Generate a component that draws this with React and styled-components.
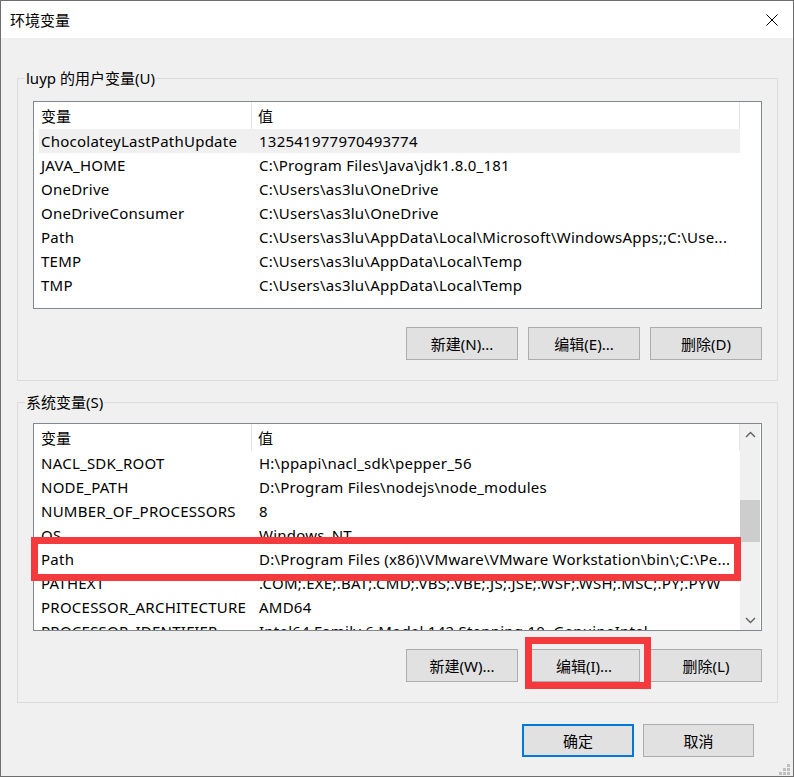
import React from 'react';
import styled, { createGlobalStyle } from 'styled-components';

const GlobalStyle = createGlobalStyle`
  html, body { margin: 0; padding: 0; background: #ffffff; }
  body {
    font-family: "Noto Sans", "Noto Sans CJK SC", sans-serif;
    font-size: 15px;
    color: #000000;
  }
  * { box-sizing: border-box; }
`;

const Window = styled.div`
  position: relative;
  width: 794px;
  height: 777px;
  border: 1px solid #6e6e6e;
  background: #f0f0f0;
  display: flex;
  flex-direction: column;
  overflow: hidden;
`;

const TitleBar = styled.div`
  height: 37px;
  flex: none;
  background: #ffffff;
  display: flex;
  align-items: center;
  justify-content: space-between;
  padding-left: 9px;
`;

const Title = styled.span`
  font-size: 15px;
  line-height: 20px;
`;

const CloseButton = styled.div`
  width: 42px;
  height: 37px;
  display: flex;
  align-items: center;
  justify-content: center;
`;

const Body = styled.div`
  flex: 1;
  display: flex;
  flex-direction: column;
  padding: 30px 15px 0 16px;
`;

const Group = styled.fieldset`
  margin: ${(p) => p.$top || 0}px 0 0 0;
  border: 1px solid #dcdcdc;
  padding: 0 15px 20px 15px;
  min-width: 0;
`;

const Legend = styled.legend`
  margin-left: -8px;
  padding: 0 1px;
  font-size: 15px;
  line-height: 20px;
`;

const ListBox = styled.div`
  margin-top: ${(p) => p.$top}px;
  height: 208px;
  border: 1px solid #828790;
  background: #ffffff;
  display: flex;
  padding-left: 5px;
  overflow: hidden;
`;

const ListBody = styled.div`
  width: 701px;
  flex: none;
  overflow: hidden;
`;

const columns = `213px 1fr`;

const HeaderRow = styled.div`
  display: grid;
  grid-template-columns: ${columns};
  height: 27px;
`;

const HeaderCell = styled.div`
  padding: 2px 0 0 ${(p) => (p.$first ? 2 : 6)}px;
  line-height: 24px;
  border-right: 1px solid #e5e5e5;
  white-space: nowrap;
  overflow: hidden;
`;

const Row = styled.div`
  display: grid;
  grid-template-columns: ${columns};
  height: 24px;
  line-height: 24px;
  letter-spacing: 0.24px;
  background: ${(p) => (p.$selected ? '#f0f0f0' : 'transparent')};
`;

const Cell = styled.div`
  padding-left: ${(p) => (p.$first ? 2 : 7)}px;
  white-space: nowrap;
  overflow: hidden;
`;

const Scrollbar = styled.div`
  width: 20px;
  flex: none;
  background: #f0f0f0;
  display: flex;
  flex-direction: column;
`;

const ArrowButton = styled.div`
  height: 20px;
  flex: none;
  display: flex;
  align-items: center;
  justify-content: center;
`;

const Track = styled.div`
  flex: 1;
  display: flex;
  flex-direction: column;
`;

const Thumb = styled.div`
  height: 42px;
  background: #cdcdcd;
`;

const ButtonRow = styled.div`
  margin-top: ${(p) => p.$top || 18}px;
  display: flex;
  justify-content: flex-end;
  gap: ${(p) => p.$gap || 10}px;
  padding-right: ${(p) => p.$right || 0}px;
`;

const Button = styled.div`
  width: ${(p) => p.$w || 112}px;
  height: 33px;
  display: flex;
  align-items: center;
  justify-content: center;
  background: #e1e1e1;
  border: ${(p) => (p.$default ? '2px solid #0078d7' : '1px solid #adadad')};
  font-size: 15px;
`;

const Highlight = styled.div`
  position: absolute;
  border: 7px solid #f43a3c;
  pointer-events: none;
`;

const Grip = styled.div`
  position: absolute;
  right: 1px;
  bottom: 1px;
  width: 14px;
  height: 14px;
`;

const userVars = [
  ['ChocolateyLastPathUpdate', '132541977970493774'],
  ['JAVA_HOME', String.raw`C:\Program Files\Java\jdk1.8.0_181`],
  ['OneDrive', String.raw`C:\Users\as3lu\OneDrive`],
  ['OneDriveConsumer', String.raw`C:\Users\as3lu\OneDrive`],
  ['Path', String.raw`C:\Users\as3lu\AppData\Local\Microsoft\WindowsApps;;C:\Use...`],
  ['TEMP', String.raw`C:\Users\as3lu\AppData\Local\Temp`],
  ['TMP', String.raw`C:\Users\as3lu\AppData\Local\Temp`],
];

const sysVars = [
  ['NACL_SDK_ROOT', String.raw`H:\ppapi\nacl_sdk\pepper_56`],
  ['NODE_PATH', String.raw`D:\Program Files\nodejs\node_modules`],
  ['NUMBER_OF_PROCESSORS', '8'],
  ['OS', 'Windows_NT'],
  ['Path', String.raw`D:\Program Files (x86)\VMware\VMware Workstation\bin\;C:\Pe...`],
  ['PATHEXT', '.COM;.EXE;.BAT;.CMD;.VBS;.VBE;.JS;.JSE;.WSF;.WSH;.MSC;.PY;.PYW'],
  ['PROCESSOR_ARCHITECTURE', 'AMD64'],
  ['PROCESSOR_IDENTIFIER', 'Intel64 Family 6 Model 142 Stepping 10, GenuineIntel'],
];

const Chevron = ({ up }) => (
  <svg width="11" height="7" viewBox="0 0 11 7">
    <path
      d={up ? 'M1 6 L5.5 1.5 L10 6' : 'M1 1 L5.5 5.5 L10 1'}
      fill="none"
      stroke="#606060"
      strokeWidth="1.4"
    />
  </svg>
);

function VarList({ rows, top, selected, scroll }) {
  return (
    <ListBox $top={top}>
      <ListBody>
        <HeaderRow>
          <HeaderCell $first>变量</HeaderCell>
          <HeaderCell>值</HeaderCell>
        </HeaderRow>
        {rows.map(([k, v], i) => (
          <Row key={k + i} $selected={i === selected}>
            <Cell $first>{k}</Cell>
            <Cell>{v}</Cell>
          </Row>
        ))}
      </ListBody>
      {scroll !== undefined && (
        <Scrollbar>
          <ArrowButton><Chevron up /></ArrowButton>
          <Track>
            <Thumb style={{ marginTop: `${scroll}px` }} />
          </Track>
          <ArrowButton><Chevron /></ArrowButton>
        </Scrollbar>
      )}
    </ListBox>
  );
}

export default function App() {
  return (
    <>
      <GlobalStyle />
      <Window>
        <TitleBar>
          <Title>环境变量</Title>
          <CloseButton>
            <svg width="12" height="12" viewBox="0 0 12 12">
              <path d="M0.5 0.5 L11.5 11.5 M11.5 0.5 L0.5 11.5" stroke="#000" strokeWidth="1" fill="none" />
            </svg>
          </CloseButton>
        </TitleBar>
        <Body>
          <Group>
            <Legend>luyp 的用户变量(U)</Legend>
            <VarList rows={userVars} top={13} selected={0} />
            <ButtonRow>
              <Button>新建(N)...</Button>
              <Button>编辑(E)...</Button>
              <Button>删除(D)</Button>
            </ButtonRow>
          </Group>
          <Group $top={11}>
            <Legend>系统变量(S)</Legend>
            <VarList rows={sysVars} top={11} scroll={56} />
            <ButtonRow>
              <Button>新建(W)...</Button>
              <Button>编辑(I)...</Button>
              <Button>删除(L)</Button>
            </ButtonRow>
          </Group>
          <ButtonRow $top={21} $right={24} $gap={9}>
            <Button $default>确定</Button>
            <Button $w={111}>取消</Button>
          </ButtonRow>
        </Body>
        <Highlight style={{ left: 30, top: 536, width: 710, height: 44 }} />
        <Highlight style={{ left: 524, top: 636, width: 126, height: 52 }} />
        <Grip>
          <svg width="14" height="14" viewBox="0 0 14 14">
            <g fill="#bfbfbf">
              <rect x="9" y="1" width="3" height="3" />
              <rect x="5" y="5" width="3" height="3" />
              <rect x="9" y="5" width="3" height="3" />
              <rect x="1" y="9" width="3" height="3" />
              <rect x="5" y="9" width="3" height="3" />
              <rect x="9" y="9" width="3" height="3" />
            </g>
          </svg>
        </Grip>
      </Window>
    </>
  );
}
